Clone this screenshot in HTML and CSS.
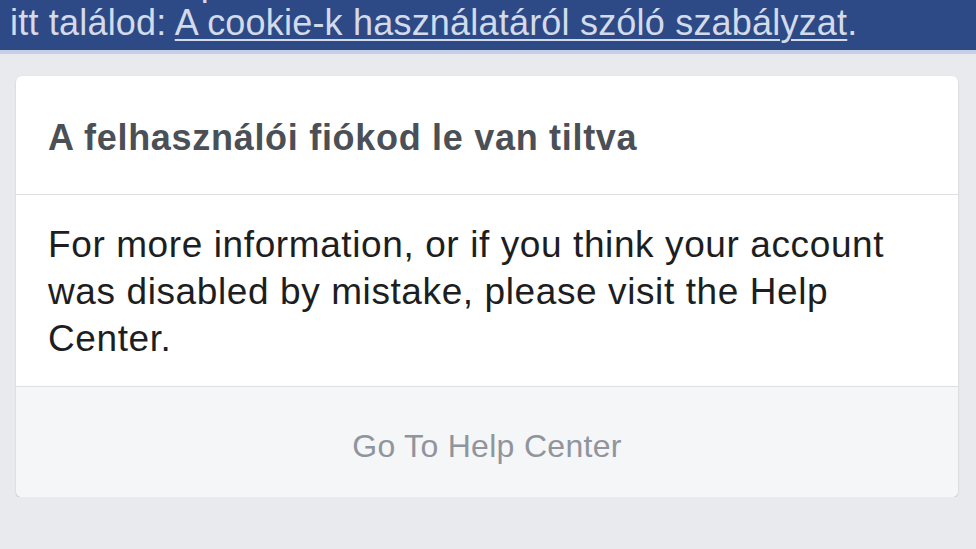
FILE: index.html
```html
<!DOCTYPE html>
<html lang="hu">
<head>
  <meta charset="UTF-8">
  <title>Fiók letiltva</title>
  <meta name="viewport" content="width=device-width, initial-scale=1">
  <link rel="stylesheet" href="styles.css">
</head>
<body>
  <div class="cookie-banner">
    <p class="cookie-text">
      Az oldal a típusuk szerint eltérő cookie-kat használ. További információkat<br>
      itt találod: <a href="#" class="cookie-link">A cookie-k használatáról szóló szabályzat</a>.
    </p>
  </div>

  <div class="card">
    <div class="card-header">
      <h2 class="card-title">A felhasználói fiókod le van tiltva</h2>
    </div>
    <div class="card-body">
      For more information, or if you think your account was disabled by mistake, please visit the Help Center.
    </div>
    <div class="card-footer">
      <a href="#" class="help-link">Go To Help Center</a>
    </div>
  </div>
</body>
</html>
```

FILE: styles.css
```css
:root {
  --page-bg: #e9eaed;
  --banner-bg: #2d4a86;
  --banner-fg: #d3dbeb;
  --title: #4b4f56;
  --text: #1c1e21;
  --muted: #90949c;
  --divider: #dddfe2;
  --footer-bg: #f5f6f7;
  --font: 'Liberation Sans', Arial, sans-serif;
}

body {
  margin: 0;
  background: var(--page-bg);
  font-family: var(--font);
}

.cookie-banner {
  height: 50px;
  overflow: hidden;
  background: var(--banner-bg);
  border-bottom: 4px solid #c6d0e4;
}

.cookie-text {
  margin: -37px 0 0;
  padding: 0 10px;
  font-size: 36px;
  letter-spacing: 0.2px;
  line-height: 40px;
  color: var(--banner-fg);
  white-space: nowrap;
}

.cookie-link {
  color: var(--banner-fg);
  text-decoration: underline;
  text-underline-offset: 4px;
  text-decoration-thickness: 2px;
}

.card {
  margin: 22px 18px 0 16px;
  background: #fff;
  border-radius: 6px;
  box-shadow: 0 1px 2px rgba(0,0,0,0.18);
  overflow: hidden;
}

.card-header {
  height: 118px;
  display: flex;
  align-items: center;
  padding: 0 32px;
  border-bottom: 1px solid var(--divider);
}

.card-title {
  margin: 0;
  padding-top: 6px;
  font-size: 36px;
  letter-spacing: 0.7px;
  font-weight: bold;
  color: var(--title);
}

.card-body {
  padding: 26px 32px 24px;
  font-size: 37px;
  letter-spacing: 0.6px;
  line-height: 47px;
  color: var(--text);
  border-bottom: 1px solid var(--divider);
}

.card-footer {
  height: 110px;
  display: flex;
  align-items: center;
  justify-content: center;
  padding-top: 8px;
  box-sizing: border-box;
  background: var(--footer-bg);
}

.help-link {
  font-size: 32px;
  letter-spacing: 0.3px;
  color: var(--muted);
  text-decoration: none;
}
```
